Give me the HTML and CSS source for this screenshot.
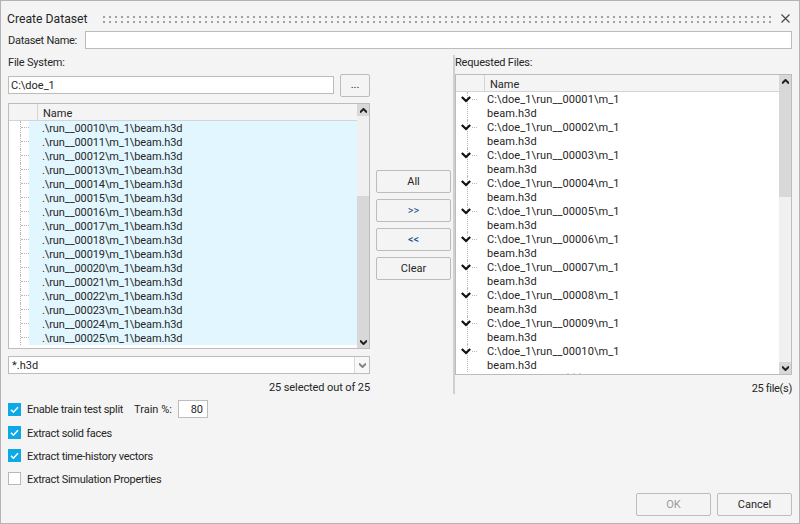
FILE: index.html
```html
<!DOCTYPE html>
<html lang="en">
<head>
<meta charset="utf-8">
<title>Create Dataset</title>
<link rel="stylesheet" href="styles.css">
</head>
<body>
<svg class="defs" width="0" height="0" aria-hidden="true">
  <symbol id="chev" viewBox="0 0 10 7"><path d="M.8 1 5 5 9.2 1" fill="none" stroke="#111" stroke-width="2.2"/></symbol>
  <symbol id="up" viewBox="0 0 7 5"><path d="M0 4.5 3.5 1 7 4.5" fill="none" stroke="#222" stroke-width="2"/></symbol>
  <symbol id="down" viewBox="0 0 7 5"><path d="M0 .5 3.5 4 7 .5" fill="none" stroke="#222" stroke-width="2"/></symbol>
  <symbol id="tick" viewBox="0 0 13 13"><path d="M3 6.8 5.4 9.2 10 4.2" fill="none" stroke="#fff" stroke-width="1.6"/></symbol>
</svg>
<main class="window">
  <header class="title-row">
    <span class="title">Create Dataset</span>
    <span class="grip"></span>
    <svg class="close" width="9" height="9" viewBox="0 0 9 9"><path d="M.5 .5 8.5 8.5M8.5 .5 .5 8.5" stroke="#4a4a4a" stroke-width="1.2" fill="none"/></svg>
  </header>
  <div class="name-row">
    <label class="label tight">Dataset Name:</label>
    <div class="field name-field"></div>
  </div>
  <div class="split">
    <section class="left">
      <div class="label soft">File System:</div>
      <div class="path-row">
        <div class="field path-field">C:\doe_1</div>
        <button class="btn browse">...</button>
      </div>
      <div class="tree left-tree">
        <div class="tree-body">
          <div class="head"><span class="head-gap"></span><span class="head-name">Name</span></div>
          <div class="rows">
            <div class="row sel"><span>.\run__00010\m_1\beam.h3d</span></div>
            <div class="row sel"><span>.\run__00011\m_1\beam.h3d</span></div>
            <div class="row sel"><span>.\run__00012\m_1\beam.h3d</span></div>
            <div class="row sel"><span>.\run__00013\m_1\beam.h3d</span></div>
            <div class="row sel"><span>.\run__00014\m_1\beam.h3d</span></div>
            <div class="row sel"><span>.\run__00015\m_1\beam.h3d</span></div>
            <div class="row sel"><span>.\run__00016\m_1\beam.h3d</span></div>
            <div class="row sel"><span>.\run__00017\m_1\beam.h3d</span></div>
            <div class="row sel"><span>.\run__00018\m_1\beam.h3d</span></div>
            <div class="row sel"><span>.\run__00019\m_1\beam.h3d</span></div>
            <div class="row sel"><span>.\run__00020\m_1\beam.h3d</span></div>
            <div class="row sel"><span>.\run__00021\m_1\beam.h3d</span></div>
            <div class="row sel"><span>.\run__00022\m_1\beam.h3d</span></div>
            <div class="row sel"><span>.\run__00023\m_1\beam.h3d</span></div>
            <div class="row sel"><span>.\run__00024\m_1\beam.h3d</span></div>
            <div class="row sel"><span>.\run__00025\m_1\beam.h3d</span></div>
          </div>
        </div>
        <div class="scroll">
          <div class="sb-btn"><svg width="7" height="5"><use href="#up"/></svg></div>
          <div class="track left-track-top"></div>
          <div class="thumb left-thumb"></div>
          <div class="sb-btn"><svg width="7" height="5"><use href="#down"/></svg></div>
        </div>
      </div>
      <div class="combo">
        <div class="combo-text">*.h3d</div>
        <div class="combo-arrow"><svg width="7" height="5"><use href="#down"/></svg></div>
      </div>
      <div class="status">25 selected out of 25</div>
    </section>
    <nav class="mid">
      <button class="btn move">All</button>
      <button class="btn move arrows">&gt;&gt;</button>
      <button class="btn move arrows">&lt;&lt;</button>
      <button class="btn move">Clear</button>
    </nav>
    <div class="splitter"></div>
    <section class="right">
      <div class="label soft">Requested Files:</div>
      <div class="tree right-tree">
        <div class="tree-body">
          <div class="head"><span class="head-gap"></span><span class="head-name">Name</span></div>
          <div class="rows">
            <div class="item"><svg class="chev" width="10" height="7"><use href="#chev"/></svg><span>C:\doe_1\run__00001\m_1<br>beam.h3d</span></div>
            <div class="item"><svg class="chev" width="10" height="7"><use href="#chev"/></svg><span>C:\doe_1\run__00002\m_1<br>beam.h3d</span></div>
            <div class="item"><svg class="chev" width="10" height="7"><use href="#chev"/></svg><span>C:\doe_1\run__00003\m_1<br>beam.h3d</span></div>
            <div class="item"><svg class="chev" width="10" height="7"><use href="#chev"/></svg><span>C:\doe_1\run__00004\m_1<br>beam.h3d</span></div>
            <div class="item"><svg class="chev" width="10" height="7"><use href="#chev"/></svg><span>C:\doe_1\run__00005\m_1<br>beam.h3d</span></div>
            <div class="item"><svg class="chev" width="10" height="7"><use href="#chev"/></svg><span>C:\doe_1\run__00006\m_1<br>beam.h3d</span></div>
            <div class="item"><svg class="chev" width="10" height="7"><use href="#chev"/></svg><span>C:\doe_1\run__00007\m_1<br>beam.h3d</span></div>
            <div class="item"><svg class="chev" width="10" height="7"><use href="#chev"/></svg><span>C:\doe_1\run__00008\m_1<br>beam.h3d</span></div>
            <div class="item"><svg class="chev" width="10" height="7"><use href="#chev"/></svg><span>C:\doe_1\run__00009\m_1<br>beam.h3d</span></div>
            <div class="item"><svg class="chev" width="10" height="7"><use href="#chev"/></svg><span>C:\doe_1\run__00010\m_1<br>beam.h3d</span></div>
            <div class="clipped"></div>
          </div>
        </div>
        <div class="scroll">
          <div class="sb-btn"><svg width="7" height="5"><use href="#up"/></svg></div>
          <div class="thumb right-thumb"></div>
          <div class="track right-track"></div>
          <div class="sb-btn"><svg width="7" height="5"><use href="#down"/></svg></div>
        </div>
      </div>
      <div class="status files">25 file(s)</div>
    </section>
  </div>
  <div class="options">
    <div class="opt first">
      <span class="check on"><svg width="13" height="13"><use href="#tick"/></svg></span>
      <span class="opt-text">Enable train test split</span>
      <span class="train-label">Train %:</span>
      <div class="field train-field">80</div>
    </div>
    <div class="opt">
      <span class="check on"><svg width="13" height="13"><use href="#tick"/></svg></span>
      <span class="opt-text">Extract solid faces</span>
    </div>
    <div class="opt">
      <span class="check on"><svg width="13" height="13"><use href="#tick"/></svg></span>
      <span class="opt-text">Extract time-history vectors</span>
    </div>
    <div class="opt">
      <span class="check"></span>
      <span class="opt-text">Extract Simulation Properties</span>
    </div>
  </div>
  <footer class="footer">
    <button class="btn action" disabled>OK</button>
    <button class="btn action">Cancel</button>
  </footer>
</main>
</body>
</html>
```
FILE: styles.css
```css
* { box-sizing: border-box; }
html, body { margin: 0; padding: 0; }
body {
  width: 800px;
  height: 524px;
  overflow: hidden;
  font-family: Roboto, "Liberation Sans", sans-serif;
  font-size: 11px;
  line-height: 16px;
  color: #262626;
  background: #f4f4f4;
}
.defs { display: block; height: 0; }
.window {
  width: 800px;
  height: 524px;
  border: 1px solid #b4b4b4;
  display: flex;
  flex-direction: column;
  background: #f4f4f4;
}
.title-row {
  height: 30px;
  display: flex;
  align-items: center;
  padding: 5px 8px 0 6px;
}
.title { font-size: 12.2px; width: 96px; flex: none; }
.grip {
  flex: none;
  width: 668px;
  height: 7px;
  margin-top: 2px;
  background: repeating-linear-gradient(90deg, #a0a0a0 0 2px, transparent 2px 6px);
  -webkit-mask: repeating-linear-gradient(180deg, #000 0 2px, transparent 2px 5px);
  mask: repeating-linear-gradient(180deg, #000 0 2px, transparent 2px 5px);
}
.close { margin-left: 10px; flex: none; }
.label { display: block; height: 14px; }
.name-row { display: flex; align-items: center; height: 18px; padding-left: 7px; padding-right: 7px; }
.name-row .label { width: 77px; flex: none; }
.tight { letter-spacing: -.28px; }
.soft { letter-spacing: -.2px; }
.field {
  background: #fff;
  border: 1px solid #bcbcbc;
  height: 18px;
  padding: 1px 2px;
}
.name-field { flex: 1; }
.split { display: flex; margin-top: 6px; height: 339px; padding-left: 7px; }
.left { width: 362px; flex: none; display: flex; flex-direction: column; }
.path-row { display: flex; align-items: center; justify-content: space-between; height: 22px; margin-top: 5px; }
.path-field { width: 326px; }
.btn {
  font: inherit;
  color: #262626;
  background: #f4f4f4;
  border: 1px solid #bcbcbc;
  border-radius: 2px;
  padding: 0;
  height: 23px;
}
.browse { width: 30px; height: 23px; }
.tree { display: flex; border: 1px solid #bcbcbc; background: #fff; }
.tree-body { flex: 1; min-width: 0; display: flex; flex-direction: column; overflow: hidden; }
.head {
  height: 17px;
  flex: none;
  display: flex;
  background: #f4f4f4;
  border-bottom: 1px solid #d4d4d4;
}
.head-gap { width: 29px; border-right: 1px solid #d4d4d4; flex: none; }
.head-name { padding-left: 5px; line-height: 19px; }
.rows { flex: 1; overflow: hidden; }
.left-tree { height: 246px; margin-top: 7px; }
.right-tree { height: 301px; margin-top: 5px; }
.row {
  height: 14px;
  margin-left: 20px;
  padding-left: 13px;
  background: #e1f6fe;
  position: relative;
  white-space: nowrap;
  letter-spacing: -.1px;
}
.row::before {
  content: "";
  position: absolute;
  left: -9px;
  top: 0;
  height: 14px;
  border-left: 1px dotted #b8b8b8;
}
.row::after {
  content: "";
  position: absolute;
  left: -8px;
  top: 6px;
  width: 8px;
  border-top: 1px dotted #b8b8b8;
}
.item {
  height: 28px;
  padding-left: 31px;
  padding-top: 1px;
  line-height: 14px;
  letter-spacing: .1px;
  position: relative;
  white-space: nowrap;
}
.item::before {
  content: "";
  position: absolute;
  left: 11px;
  top: 0;
  height: 28px;
  border-left: 1px dotted #b8b8b8;
}
.item::after {
  content: "";
  position: absolute;
  left: 16px;
  top: 7px;
  width: 5px;
  border-top: 1px dotted #b8b8b8;
}
.chev { position: absolute; left: 5px; top: 4px; z-index: 1; }
.clipped {
  width: 14px;
  height: 1px;
  margin: 1px 0 0 111px;
  background: repeating-linear-gradient(90deg, #d6d6f4 0 2px, transparent 2px 6px);
}
.scroll { width: 12px; flex: none; display: flex; flex-direction: column; background: #f0f0f0; }
.sb-btn { height: 12px; flex: none; background: #d8d8d8; display: flex; align-items: center; justify-content: center; }
.track { background: #f0f0f0; }
.left-track-top { height: 80px; }
.left-thumb { flex: 1; }
.thumb { background: #d8d8d8; }
.right-thumb { height: 110px; }
.right-track { flex: 1; }
.combo { display: flex; height: 18px; margin-top: 7px; border: 1px solid #bcbcbc; background: #fff; }
.combo-text { flex: 1; padding-left: 3px; line-height: 18px; }
.combo-arrow { width: 15px; border-left: 1px solid #bcbcbc; background: #f4f4f4; display: flex; align-items: center; justify-content: center; opacity: .55; }
.status { text-align: right; margin-top: 6px; height: 14px; letter-spacing: -.1px; }
.status.files { letter-spacing: -.3px; }
.mid { width: 75px; margin-left: 6px; flex: none; display: flex; flex-direction: column; gap: 6px; padding-top: 115px; }
.move { width: 75px; }
.arrows { color: #1a4f8a; }
.splitter { width: 2px; background: #d0d0d0; margin-left: 2px; flex: none; }
.right { width: 337px; margin-left: 0; flex: none; display: flex; flex-direction: column; }
.options { margin-top: 3px; padding-left: 7px; }
.opt { display: flex; height: 23px; align-items: center; white-space: nowrap; }
.opt.first { height: 24px; }
.check {
  width: 13px;
  height: 13px;
  flex: none;
  background: #fff;
  border: 1px solid #b8b8b8;
  display: block;
  position: relative;
}
.check.on { background: #0ba9e6; border-color: #0ba9e6; }
.check svg { position: absolute; left: -1px; top: -1px; }
.opt-text { margin-left: 6px; letter-spacing: -.28px; padding-top: 2px; }
.first .opt-text { width: 107px; flex: none; }
.train-label { width: 44px; flex: none; padding-top: 2px; }
.train-field { width: 30px; text-align: right; padding-right: 4px; }
.footer { margin-top: auto; display: flex; justify-content: flex-end; gap: 6px; padding: 0 7px 7px 0; }
.action { width: 75px; }
.action:disabled { color: #9a9a9a; }
```
